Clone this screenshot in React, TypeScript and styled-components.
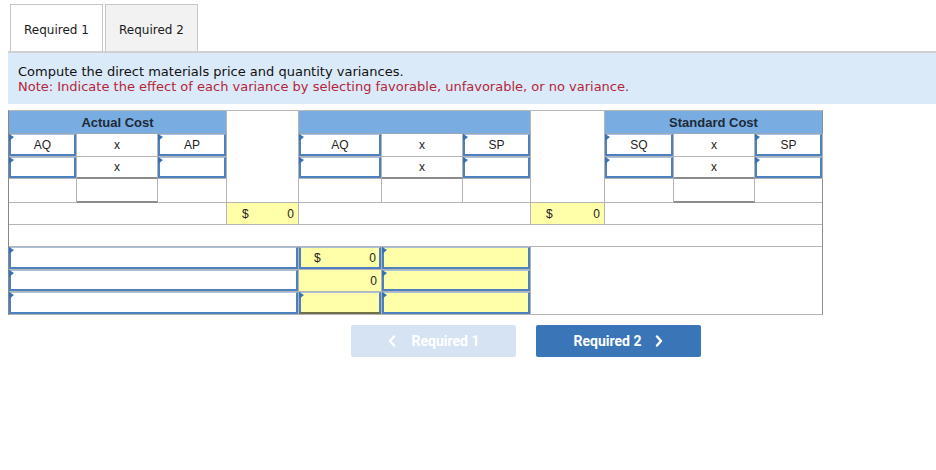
import React from 'react';
import styled, { createGlobalStyle } from 'styled-components';

const GlobalStyle = createGlobalStyle`
  body {
    margin: 0;
    background: #fff;
    font-family: "DejaVu Sans", Verdana, sans-serif;
  }
`;

const Page = styled.div`
  padding: 4px 0 0 8px;
`;

const TabBar = styled.div`
  display: flex;
  gap: 2px;
  padding-left: 2px;
  border-bottom: 2px solid #d0d0d0;
`;

const Tab = styled.div<{ $active?: boolean }>`
  width: 93px;
  height: 47px;
  box-sizing: border-box;
  display: flex;
  align-items: center;
  justify-content: center;
  padding-top: 4px;
  border: 1px solid #c6c6c6;
  border-bottom: none;
  background: ${props => (props.$active ? '#fff' : '#f2f2f2')};
  font-size: 12px;
  color: #1a1a1a;
`;

const Instructions = styled.div`
  background: #dbeaf8;
  padding: 11px 10px 10px;
  font-size: 13px;
  line-height: 15px;
  color: #111;

  > p {
    margin: 0;
  }
`;

const Note = styled.p`
  color: #b3263a;
`;

const Grid = styled.div`
  display: grid;
  grid-template-columns: 68px 81px 69px 72px 83px 81px 68px 74px 69px 81px 68px;
  grid-template-rows: 23px 23px 22px 24px 22px 22px 23px 22px 23px;
  width: max-content;
  margin-top: 6px;
  border-top: 1px solid #b8b8b8;
  border-left: 1px solid #888;
  font-family: "Liberation Sans", Arial, sans-serif;
  font-size: 12px;
  color: #222;
`;

const Cell = styled.div<{ $span?: number; $rows?: number; $strong?: boolean; $edge?: boolean }>`
  grid-column: span ${props => props.$span ?? 1};
  grid-row: span ${props => props.$rows ?? 1};
  box-sizing: border-box;
  min-width: 0;
  border-right: 1px solid ${props => (props.$edge ? '#8c8c8c' : '#b4b4b4')};
  border-bottom: ${props => (props.$strong ? '2px solid #8c8c8c' : '1px solid #b4b4b4')};
  background: #fff;
  display: flex;
  align-items: center;
  justify-content: center;
`;

const HeadCell = styled(Cell)`
  background: #79ade2;
  font-weight: bold;
  font-size: 13px;
  color: #1e2a36;
  border-bottom-color: #9aa8b8;
`;

const SumCell = styled(Cell)`
  background: #ffffaa;
  justify-content: space-between;
  padding: 0 4px 0 15px;
`;

const FieldCell = styled(Cell)`
  align-items: stretch;
  justify-content: stretch;
`;

const Field = styled.div<{ $yellow?: boolean; $sunk?: boolean }>`
  flex: 1;
  position: relative;
  box-sizing: border-box;
  display: flex;
  align-items: center;
  justify-content: ${props => (props.$yellow ? 'space-between' : 'center')};
  padding: ${props => (props.$yellow ? '0 3px 0 13px' : '0')};
  background: ${props => (props.$yellow ? '#ffffaa' : '#fff')};
  border: 2px solid #4d80bf;
  border-top: 1px solid #a9c1de;
  border-bottom-color: ${props => (props.$sunk ? '#6f6f4a' : '#4d80bf')};

  &::before {
    content: '';
    position: absolute;
    left: -2px;
    top: -1px;
    border-left: 5px solid #3670b8;
    border-top: 3px solid transparent;
    border-bottom: 4px solid transparent;
  }
`;

const PlainField = styled(Field)`
  &::before {
    display: none;
  }
`;

const Nav = styled.div`
  display: flex;
  gap: 20px;
  padding: 10px 0 0 343px;
`;

const NavButton = styled.button<{ $off?: boolean }>`
  width: 165px;
  height: 32px;
  border: none;
  border-radius: 2px;
  background: ${props => (props.$off ? '#d6e3f3' : '#3a75b8')};
  color: #fff;
  font: bold 14px Roboto, "Liberation Sans", sans-serif;
  display: flex;
  align-items: center;
  justify-content: center;
  gap: ${props => (props.$off ? '16px' : '14px')};
  padding: 0;
`;

const Chevron = ({ dir }: { dir: 'left' | 'right' }) => (
  <svg width="8" height="12" viewBox="0 0 8 12">
    <polyline
      points={dir === 'left' ? '6,1.5 2,6 6,10.5' : '2,1.5 6,6 2,10.5'}
      fill="none"
      stroke="#fff"
      strokeWidth="2.4"
      strokeLinecap="round"
      strokeLinejoin="round"
    />
  </svg>
);

const Input = ({ children, span }: { children?: React.ReactNode; span?: number }) => (
  <FieldCell $span={span}>
    <Field>{children}</Field>
  </FieldCell>
);

const Mult = ({ strong }: { strong?: boolean }) => (
  <Cell $strong={strong}>x</Cell>
);

const App = () => (
  <Page>
    <GlobalStyle />
    <TabBar>
      <Tab $active>Required 1</Tab>
      <Tab>Required 2</Tab>
    </TabBar>
    <Instructions>
      <p>Compute the direct materials price and quantity variances.</p>
      <Note>Note: Indicate the effect of each variance by selecting favorable, unfavorable, or no variance.</Note>
    </Instructions>

    <Grid>
      {/* row 1 */}
      <HeadCell $span={3}>Actual Cost</HeadCell>
      <Cell $rows={4} />
      <HeadCell $span={3} />
      <Cell $rows={4} />
      <HeadCell $span={3} $edge>Standard Cost</HeadCell>

      {/* row 2 */}
      <Input>AQ</Input>
      <Mult />
      <Input>AP</Input>
      <Input>AQ</Input>
      <Mult />
      <Input>SP</Input>
      <Input>SQ</Input>
      <Mult />
      <Input>SP</Input>

      {/* row 3 */}
      <Input />
      <Mult strong />
      <Input />
      <Input />
      <Mult strong />
      <Input />
      <Input />
      <Mult strong />
      <Input />

      {/* row 4 */}
      <Cell />
      <Cell $strong />
      <Cell />
      <Cell />
      <Cell />
      <Cell />
      <Cell />
      <Cell $strong />
      <Cell $edge />

      {/* row 5 */}
      <Cell $span={3} />
      <SumCell>
        <span>$</span>
        <span>0</span>
      </SumCell>
      <Cell $span={3} />
      <SumCell>
        <span>$</span>
        <span>0</span>
      </SumCell>
      <Cell $span={3} $edge />

      {/* row 6 */}
      <Cell $span={11} $edge />

      {/* rows 7-9 */}
      <Input span={4} />
      <FieldCell>
        <PlainField $yellow>
          <span>$</span>
          <span>0</span>
        </PlainField>
      </FieldCell>
      <FieldCell $span={2}>
        <Field $yellow />
      </FieldCell>
      <Cell $span={4} $rows={3} $edge />

      <Input span={4} />
      <SumCell>
        <span />
        <span>0</span>
      </SumCell>
      <FieldCell $span={2}>
        <Field $yellow />
      </FieldCell>

      <Input span={4} />
      <FieldCell>
        <Field $yellow $sunk />
      </FieldCell>
      <FieldCell $span={2}>
        <Field $yellow />
      </FieldCell>
    </Grid>

    <Nav>
      <NavButton $off>
        <Chevron dir="left" />
        Required 1
      </NavButton>
      <NavButton>
        Required 2
        <Chevron dir="right" />
      </NavButton>
    </Nav>
  </Page>
);

export default App;
